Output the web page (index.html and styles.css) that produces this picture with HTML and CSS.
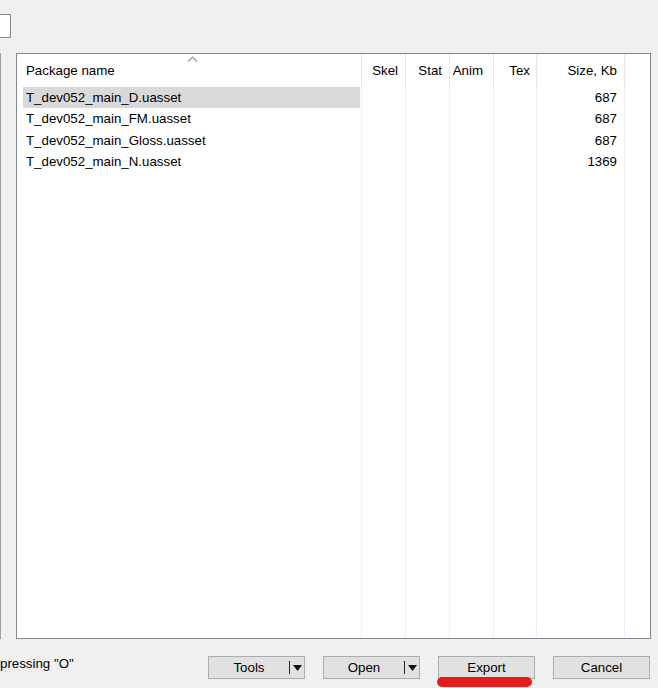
FILE: index.html
```html
<!DOCTYPE html>
<html lang="en">
<head>
    <meta charset="UTF-8">
    <title>Package list</title>
    <link rel="stylesheet" href="styles.css">
</head>
<body>
    <div class="top">
        <div class="textbox"></div>
    </div>
    <div class="main">
        <div class="side"></div>
        <div class="list">
            <div class="col col-name">
                <div class="col-head">Package name<span class="sort-arrow">
                    <svg width="11" height="6" viewBox="0 0 11 6"><path d="M1 5.5 L5.5 1 L10 5.5" fill="none" stroke="#9a9a9a" stroke-width="1.2"/></svg>
                </span></div>
                <div class="cell selected">T_dev052_main_D.uasset</div>
                <div class="cell">T_dev052_main_FM.uasset</div>
                <div class="cell">T_dev052_main_Gloss.uasset</div>
                <div class="cell">T_dev052_main_N.uasset</div>
            </div>
            <div class="col col-skel"><div class="col-head">Skel</div></div>
            <div class="col col-stat"><div class="col-head">Stat</div></div>
            <div class="col col-anim"><div class="col-head">Anim</div></div>
            <div class="col col-tex"><div class="col-head">Tex</div></div>
            <div class="col col-size">
                <div class="col-head">Size, Kb</div>
                <div class="cell">687</div>
                <div class="cell">687</div>
                <div class="cell">687</div>
                <div class="cell">1369</div>
            </div>
            <div class="col col-rest"><div class="col-head"></div></div>
        </div>
    </div>
    <div class="bottom">
        <div class="status">pressing "O"</div>
        <div class="buttons">
            <button class="btn split">
                <span class="btn-label">Tools</span>
                <span class="btn-drop"><span class="bar"></span><svg width="9" height="6" viewBox="0 0 9 6"><path d="M0 0 H9 L4.5 6 Z" fill="#111"/></svg></span>
            </button>
            <button class="btn split">
                <span class="btn-label">Open</span>
                <span class="btn-drop"><span class="bar"></span><svg width="9" height="6" viewBox="0 0 9 6"><path d="M0 0 H9 L4.5 6 Z" fill="#111"/></svg></span>
            </button>
            <button class="btn export">Export<span class="mark"></span></button>
            <button class="btn">Cancel</button>
        </div>
    </div>
</body>
</html>
```

FILE: styles.css
```css
body {
    margin: 0;
    width: 658px;
    height: 688px;
    overflow: hidden;
    background-color: #f0f0f0;
    font-family: "Liberation Sans", Arial, sans-serif;
    font-size: 13.3px;
    color: #000;
}

.top {
    height: 53px;
    overflow: hidden;
}

.textbox {
    box-sizing: border-box;
    margin: 14px 0 0 -40px;
    width: 51px;
    height: 24px;
    background-color: #fff;
    border: 1px solid #8a8a8a;
}

.main {
    display: flex;
    height: 586px;
}

.side {
    width: 0;
    border-right: 1px solid #a0a0a0;
}

.list {
    box-sizing: border-box;
    display: flex;
    margin-left: 15px;
    width: 635px;
    height: 586px;
    background-color: #fff;
    border: 1px solid #828790;
}

.col {
    display: flex;
    flex-direction: column;
    border-right: 1px solid #e8f0f9;
}

.col-name { width: 344px; }
.col-skel { width: 43px; }
.col-stat { width: 43px; }
.col-anim { width: 43px; }
.col-tex { width: 42px; }
.col-size { width: 87px; }
.col-rest { flex-grow: 1; border-right: none; }

.col-head {
    position: relative;
    height: 33px;
    line-height: 34px;
    text-align: right;
    padding-right: 7px;
    white-space: nowrap;
    border-right: 1px solid #e5e5e5;
    margin-right: -1px;
}

.col-name .col-head {
    text-align: left;
    padding-left: 9px;
}

.col-anim .col-head { padding-right: 10px; }
.col-tex .col-head { padding-right: 6px; }
.col-size .col-head { padding-right: 7px; }
.col-rest .col-head { border-right: none; }

.sort-arrow {
    position: absolute;
    left: 170px;
    top: 2px;
    line-height: 0;
}

.cell {
    height: 21.3px;
    line-height: 21.3px;
    white-space: nowrap;
}

.col-name .cell {
    margin-left: 6px;
    margin-right: 1px;
    padding-left: 3px;
}

.col-name .cell.selected {
    background-color: #d9d9d9;
}

.col-size .cell {
    text-align: right;
    padding-right: 7px;
}

.bottom {
    display: flex;
    justify-content: space-between;
    height: 49px;
}

.status {
    padding-top: 17px;
    white-space: nowrap;
}

.buttons {
    display: flex;
    gap: 18px;
    padding: 17px 8px 0 0;
}

.btn {
    position: relative;
    box-sizing: border-box;
    display: flex;
    align-items: center;
    justify-content: center;
    width: 97px;
    height: 23px;
    padding: 0;
    background-color: #e1e1e1;
    border: 1px solid #adadad;
    font-family: "Liberation Sans", Arial, sans-serif;
    font-size: 13.3px;
    color: #000;
}

.btn.split {
    justify-content: flex-start;
}

.btn-label {
    width: 80px;
    text-align: center;
}

.btn-drop {
    display: flex;
    align-items: center;
    gap: 3px;
}

.bar {
    width: 1px;
    height: 13px;
    background-color: #222;
}

.mark {
    position: absolute;
    left: -2px;
    top: 20px;
    width: 95px;
    height: 10px;
    border-radius: 5px;
    background-color: #e31c1c;
}
```
